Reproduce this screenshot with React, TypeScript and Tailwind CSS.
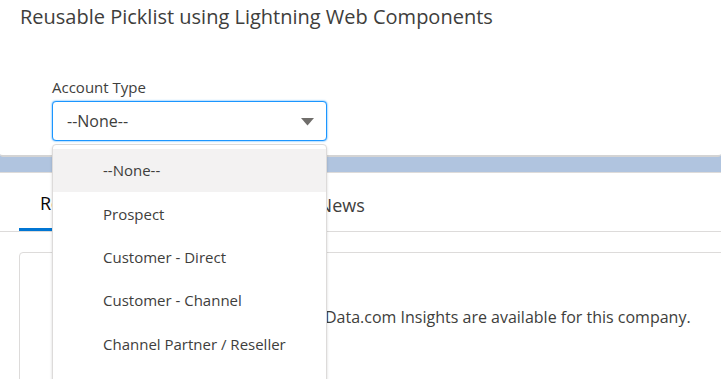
import React from 'react';

const options = ['--None--', 'Prospect', 'Customer - Direct', 'Customer - Channel', 'Channel Partner / Reseller', 'Installation Partner'];

const App = () => {
  const [value] = React.useState('--None--');

  return (
    <div className="h-[379px] w-[721px] overflow-hidden bg-[#b0c4df] font-['Open_Sans',sans-serif] text-[#3e3e3c]">
      {/* picklist card */}
      <div className="relative z-10 h-[157px] rounded-b-[3px] border-b-2 border-[#d4d4d4] bg-white">
        <h1 className="pl-5 pt-[3px] text-[20px] leading-[28px] text-[#3e3e3c]">
          Reusable Picklist using Lightning Web Components
        </h1>
        <div className="ml-[52px] mt-[47px] w-[275px]">
          <label className="block text-[15px] leading-[18px] text-[#3e3e3c]">Account Type</label>
          <div className="relative mt-[5px]">
            <button className="flex h-[40px] w-full items-center justify-between rounded-[4px] border border-[#1b96ff] bg-white pl-[14px] pr-[12px] text-[16px] text-[#3e3e3c] shadow-[0_0_2px_#1b96ff]">
              <span>{value}</span>
              <svg width="13" height="8" viewBox="0 0 13 8" className="mt-[1px]">
                <path d="M0 0h13L6.5 7.5z" fill="#706e6b" />
              </svg>
            </button>
            <ul className="absolute left-0 top-[43px] h-[260px] w-full rounded-[4px] border border-[#dddbda] bg-white pt-[4px] shadow-[0_2px_3px_rgba(0,0,0,0.16)]">
              {options.map((opt, i) => (
                <li
                  key={opt}
                  className={`flex h-[43.3px] items-center pl-[50px] text-[15px] text-[#3e3e3c] ${i === 0 ? 'bg-[#f3f2f2]' : ''}`}
                >
                  {opt}
                </li>
              ))}
            </ul>
          </div>
        </div>
      </div>

      {/* record card */}
      <div className="mt-[15px] h-[300px] border-t border-[#dddbda] bg-white">
        <div className="flex border-b border-[#dddbda] pl-[19px] pt-[12px]">
          <div className="flex h-[46px] items-center border-b-[3px] border-[#0176d3] px-[21px] pb-[6px] text-[18px] text-[#080707]">
            Related
          </div>
          <div className="flex h-[46px] items-center px-[21px] pb-[6px] text-[18px] text-[#3e3e3c]">Details</div>
          <div className="flex h-[46px] items-center pl-[95px] pr-[21px] pb-[6px] text-[18px] text-[#3e3e3c]">News</div>
        </div>
        <div className="ml-[19px] mr-[-20px] mt-[20px] h-[200px] rounded-[4px] border border-[#dddbda] pl-[305px] pt-[53px]">
          <p className="text-[16px] leading-[22px] text-[#3e3e3c]">Data.com Insights are available for this company.</p>
        </div>
      </div>
    </div>
  );
};

export default App;
